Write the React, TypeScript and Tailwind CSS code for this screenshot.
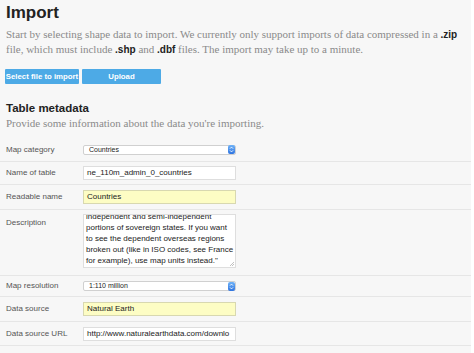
import React from "react";

function Stepper() {
  return (
    <div className="w-[7px] h-[9px] rounded-[2px] bg-gradient-to-b from-[#6fb2f7] to-[#2f74e0] flex items-center justify-center">
      <svg width="5" height="7" viewBox="0 0 5 7" fill="none">
        <path d="M1 2.6 L2.5 1.1 L4 2.6" stroke="white" strokeWidth="0.9" />
        <path d="M1 4.4 L2.5 5.9 L4 4.4" stroke="white" strokeWidth="0.9" />
      </svg>
    </div>
  );
}

function Select({ value }: { value: string }) {
  return (
    <div className="w-[153px] h-[10px] bg-white border border-[#d0d0d0] rounded-[2px] flex items-center justify-between pl-[5px]">
      <span className="text-[7px] leading-[8px] text-[#222]">{value}</span>
      <Stepper />
    </div>
  );
}

function Input({ value, yellow }: { value: string; yellow?: boolean }) {
  return (
    <div
      className={
        yellow
          ? "w-[153px] h-[14px] border flex items-center pl-[3px] overflow-hidden whitespace-nowrap bg-[#fdfdc4] border-[#d8d8b0]"
          : "w-[153px] h-[14px] border flex items-center pl-[3px] overflow-hidden whitespace-nowrap bg-white border-[#dedede]"
      }
    >
      <span className="text-[8px] leading-[10px] text-[#222]">{value}</span>
    </div>
  );
}

function Row({
  label,
  h,
  top,
  children,
}: {
  label: string;
  h: string;
  top?: boolean;
  children: React.ReactNode;
}) {
  return (
    <div className={`flex ${top ? "items-start pt-[4px]" : "items-center"} ${h} border-b border-[#e6e6e6]`}>
      <div className={`w-[83px] pl-[6px] text-[8px] leading-[10px] text-[#555] ${top ? "pt-[4px]" : ""}`}>
        {label}
      </div>
      {children}
    </div>
  );
}

export default function App() {
  return (
    <div className="w-full h-[353px] bg-white overflow-hidden font-['Liberation_Sans',Arial,sans-serif]">
      <div className="w-[471px] h-[353px] bg-[#f7f7f7] overflow-hidden">
        <div className="px-[6px] pt-[3px]">
          <h1 className="text-[17px] leading-[20px] font-bold text-[#222]">Import</h1>
          <p className="mt-[4px] text-[11px] leading-[14px] text-[#8a8a8a] font-['Liberation_Serif','Times_New_Roman',serif]">
            Start by selecting shape data to import. We currently only support imports of data compressed in a{" "}
            <b className="text-[#222] text-[10px] font-['Liberation_Sans',Arial,sans-serif]">.zip</b> file, which
            must include{" "}
            <b className="text-[#222] text-[10px] font-['Liberation_Sans',Arial,sans-serif]">.shp</b> and{" "}
            <b className="text-[#222] text-[10px] font-['Liberation_Sans',Arial,sans-serif]">.dbf</b> files. The
            import may take up to a minute.
          </p>
          <div className="mt-[12px] flex gap-[3px] -ml-[1px]">
            <button className="w-[74px] h-[15px] bg-[#4daae6] text-white text-[7.8px] font-bold flex items-center justify-center rounded-[1px]">
              Select file to import
            </button>
            <button className="w-[79px] h-[15px] bg-[#4daae6] text-white text-[7.8px] font-bold flex items-center justify-center rounded-[1px]">
              Upload
            </button>
          </div>
          <h2 className="mt-[17px] text-[11.5px] leading-[15px] font-bold text-[#222]">Table metadata</h2>
          <p className="text-[11px] leading-[14px] text-[#8a8a8a] font-['Liberation_Serif','Times_New_Roman',serif]">
            Provide some information about the data you're importing.
          </p>
        </div>
        <div className="mt-[8px]">
          <Row label="Map category" h="h-[24px]">
            <Select value="Countries" />
          </Row>
          <Row label="Name of table" h="h-[23px]">
            <Input value="ne_110m_admin_0_countries" />
          </Row>
          <Row label="Readable name" h="h-[25px]">
            <Input value="Countries" yellow />
          </Row>
          <Row label="Description" h="h-[66px]" top>
            <div className="relative w-[153px] h-[54px] bg-white border border-[#dedede] overflow-hidden pl-[2px]">
              <div className="-mt-[4px] text-[8px] leading-[11px] text-[#222]">
                <div>independent and semi-independent</div>
                <div>portions of sovereign states. If you want</div>
                <div>to see the dependent overseas regions</div>
                <div>broken out (like in ISO codes, see France</div>
                <div>for example), use map units instead."</div>
              </div>
              <svg className="absolute right-[1px] bottom-[1px]" width="5" height="5" viewBox="0 0 5 5">
                <path d="M1 5 L5 1 M3 5 L5 3" stroke="#999" strokeWidth="0.6" />
              </svg>
            </div>
          </Row>
          <Row label="Map resolution" h="h-[21px]">
            <Select value="1:110 million" />
          </Row>
          <Row label="Data source" h="h-[25px]">
            <Input value="Natural Earth" yellow />
          </Row>
          <Row label="Data source URL" h="h-[24px]">
            <Input value="http://www.naturalearthdata.com/downlo" />
          </Row>
        </div>
      </div>
    </div>
  );
}
